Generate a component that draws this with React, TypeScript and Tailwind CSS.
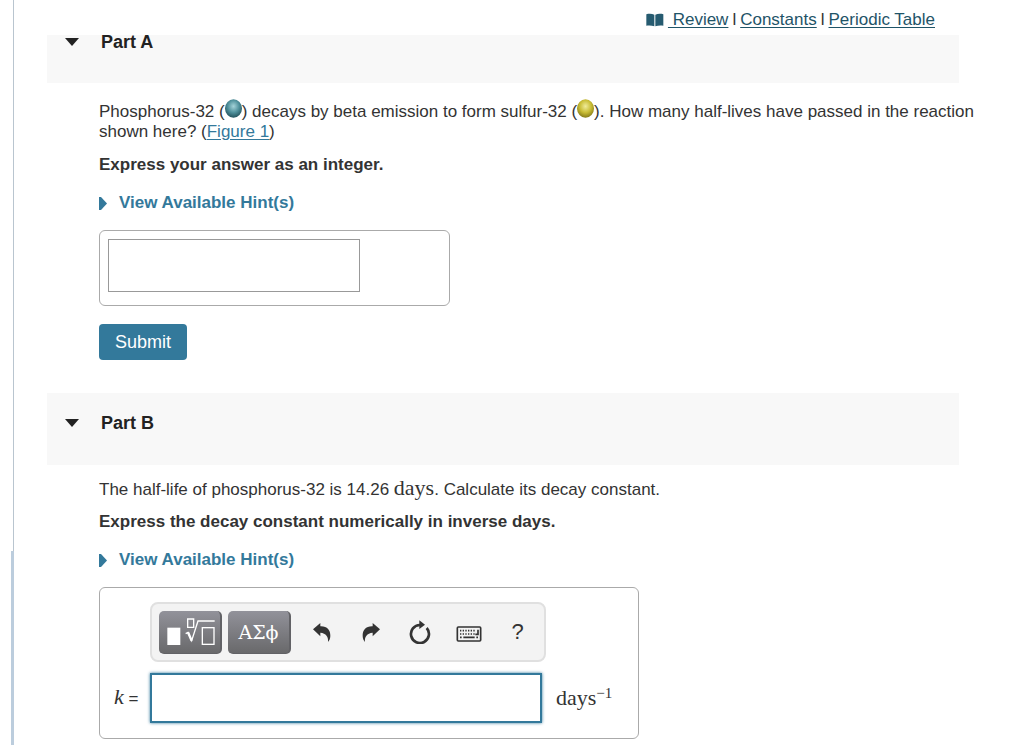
import { useState, type ReactNode } from 'react';

const linkClass = 'text-[#1f5468] underline underline-offset-2';

function BookIcon() {
  return (
    <svg className="h-3.5 w-[18px]" viewBox="0 0 54 42" aria-hidden="true">
      <path d="M1 4C8 2 18 2 25 5V40C18 37 8 37 1 38Z" fill="#265b70" />
      <path d="M28 5C35 2 45 2 52 4V38C45 37 35 37 28 40Z" fill="#265b70" />
    </svg>
  );
}

function Sphere({ id, light, mid, dark }: { id: string; light: string; mid: string; dark: string }) {
  return (
    <svg className="-mt-2 inline-block h-[19px] w-[17px]" viewBox="0 0 17 19" aria-hidden="true">
      <defs>
        <radialGradient id={id} cx="0.5" cy="0.38" r="0.62">
          <stop offset="0" stopColor={light} />
          <stop offset="0.55" stopColor={mid} />
          <stop offset="1" stopColor={dark} />
        </radialGradient>
      </defs>
      <ellipse cx="8.5" cy="9.5" rx="8.5" ry="9.3" fill={`url(#${id})`} />
    </svg>
  );
}

function ArrowIcon({ flip }: { flip?: boolean }) {
  return (
    <svg className="h-[21px] w-5" viewBox="0 0 60 63" aria-hidden="true">
      <path
        transform={flip ? 'translate(60 0) scale(-1 1)' : undefined}
        d="M3 22L25 3V13C45 12 56 25 55 42C55 50 52 56 48 60C50 45 42 33 25 32V43Z"
        fill="#333"
      />
    </svg>
  );
}

function ResetIcon() {
  return (
    <svg className="h-6 w-[22px]" viewBox="0 0 66 72" aria-hidden="true">
      <path d="M33 15A27 27 0 1 0 53 24" fill="none" stroke="#333" strokeWidth="8" />
      <path d="M31 1L48 14L31 27Z" fill="#333" />
    </svg>
  );
}

function KeyboardIcon() {
  return (
    <svg className="mt-1 h-4 w-[26px]" viewBox="0 0 78 48" aria-hidden="true">
      <rect x="4" y="3" width="70" height="42" rx="3" fill="none" stroke="#333" strokeWidth="5" />
      <path d="M12 14H60M12 24H56" stroke="#333" strokeWidth="5" strokeDasharray="4 4" />
      <path d="M66 11V25H58M12 34H17M22 34H56M61 34H66" fill="none" stroke="#333" strokeWidth="5" />
    </svg>
  );
}

function TemplateIcon() {
  return (
    <svg className="h-7 w-[50px]" viewBox="-4 0 150 84" aria-hidden="true">
      <rect x="3" y="29" width="39" height="52" fill="#fff" />
      <path d="M64 3H82V28H64Z" fill="none" stroke="#fff" strokeWidth="4" />
      <path d="M58 47L65 43L76 68L95 9H145" fill="none" stroke="#fff" strokeWidth="4" />
      <path d="M65 43L76 68" stroke="#fff" strokeWidth="7" />
      <rect x="108" y="29" width="35" height="50" fill="none" stroke="#fff" strokeWidth="4" />
    </svg>
  );
}

function PartTitle({ children, open, onToggle }: { children: ReactNode; open: boolean; onToggle: () => void }) {
  return (
    <h2 className="text-[18px] leading-3.5 font-bold text-[#222]">
      <button type="button" className="flex items-center" aria-expanded={open} onClick={onToggle}>
        <svg className="mr-[22px] h-2 w-3.5" viewBox="0 0 14 8" aria-hidden="true">
          <path d="M0 0H14L7 8Z" fill="#222" />
        </svg>
        {children}
      </button>
    </h2>
  );
}

function HintToggle() {
  return (
    <button type="button" className="flex items-center text-[17px] leading-5 font-bold text-[#33799b]">
      <svg className="mr-3 h-[13px] w-2" viewBox="0 0 8 13" aria-hidden="true">
        <path d="M0 0H2L8 6.5L2 13H0Z" fill="#33799b" />
      </svg>
      View Available Hint(s)
    </button>
  );
}

const darkKey =
  'flex h-[43px] w-[63px] items-center justify-center rounded-[5px] border-r-2 border-b border-[#626266] bg-linear-to-b from-[#92929a] to-[#69696b] text-white';
const flatKey = 'flex h-[43px] w-[49px] items-center justify-center text-[#333]';

export default function App() {
  const [openA, setOpenA] = useState(true);
  const [openB, setOpenB] = useState(true);
  const [answerA, setAnswerA] = useState('');
  const [answerB, setAnswerB] = useState('');

  return (
    <div className="flex min-h-screen bg-white font-['Liberation_Sans',Arial,sans-serif] text-[17px] leading-5 text-[#333]">
      {/* Pane divider with its scroll thumb */}
      <div className="flex w-3.5 shrink-0 flex-col items-end">
        <div className="h-[551px] w-px bg-[#b9c5cf]" />
        <div className="w-[3px] flex-1 bg-[#bccddd]" />
      </div>

      <main className="mr-[65px] ml-[33px] min-w-0 flex-1">
        <nav className="flex h-[35px] items-start justify-end gap-1 pt-2.5 pr-6">
          <a href="#review" className="flex items-center gap-1 text-[#1f5468]">
            <BookIcon />
            <span className="underline underline-offset-2">&nbsp;Review</span>
          </a>
          <span>l</span>
          <a href="#constants" className={linkClass}>Constants</a>
          <span>l</span>
          <a href="#periodic-table" className={linkClass}>Periodic Table</a>
        </nav>

        <section>
          <div className="h-12 bg-[#f8f8f8] pl-[18px]">
            <PartTitle open={openA} onToggle={() => setOpenA(!openA)}>Part A</PartTitle>
          </div>
          {openA && (
            <div className="flex flex-col items-start pt-[19px] pb-[33px] pl-[52px]">
              <p className="-mr-6">
                Phosphorus-32 (<Sphere id="phosphorus" light="#a5d3d9" mid="#4f909b" dark="#23525c" />) decays by beta
                emission to form sulfur-32 (<Sphere id="sulfur" light="#f0ec9a" mid="#c9bd35" dark="#857a18" />). How
                many half-lives have passed in the reaction shown here? (
                <a href="#figure-1" className="text-[#33799b] underline underline-offset-2">Figure 1</a>)
              </p>
              <p className="mt-[13px] font-bold">Express your answer as an integer.</p>
              <div className="mt-[18px]">
                <HintToggle />
              </div>
              <div className="mt-[17px] h-[76px] w-[351px] rounded-md border border-[#aaa] p-2">
                <input
                  type="text"
                  aria-label="Number of half-lives"
                  value={answerA}
                  onChange={(e) => setAnswerA(e.target.value)}
                  className="h-[53px] w-[252px] border border-[#999] px-2 outline-none"
                />
              </div>
              <button type="submit" className="mt-[18px] h-9 rounded-sm bg-[#33799b] px-4 text-[18px] text-white">
                Submit
              </button>
            </div>
          )}
        </section>

        <section>
          <div className="flex h-[72px] items-start bg-[#f8f8f8] pt-[23px] pl-[18px]">
            <PartTitle open={openB} onToggle={() => setOpenB(!openB)}>Part B</PartTitle>
          </div>
          {openB && (
            <div className="flex flex-col items-start pt-[13px] pb-1.5 pl-[52px]">
              <p>
                The half-life of phosphorus-32 is 14.26{' '}
                <span className="font-['Liberation_Serif',serif] text-[22px]">days</span>. Calculate its decay constant.
              </p>
              <p className="mt-3 font-bold">Express the decay constant numerically in inverse days.</p>
              <div className="mt-[18px]">
                <HintToggle />
              </div>
              <div className="mt-[17px] grid h-[152px] w-[540px] grid-cols-[36px_396px_1fr] content-start gap-y-[11px] rounded-md border border-[#aaa] pt-3.5 pl-3.5">
                <div className="col-start-2 flex h-[60px] items-center rounded-lg border-2 border-[#e0e0e0] bg-[#f3f3f3] pl-[7px]">
                  <button type="button" className={darkKey} aria-label="Templates">
                    <TemplateIcon />
                  </button>
                  <button type="button" className={`${darkKey} mr-1.5 ml-1.5 font-['DejaVu_Serif',serif] text-[19px]`}>
                    ΑΣϕ
                  </button>
                  <button type="button" className={flatKey} aria-label="Undo"><ArrowIcon /></button>
                  <button type="button" className={flatKey} aria-label="Redo"><ArrowIcon flip /></button>
                  <button type="button" className={flatKey} aria-label="Reset"><ResetIcon /></button>
                  <button type="button" className={flatKey} aria-label="Keyboard shortcuts"><KeyboardIcon /></button>
                  <button type="button" className={`${flatKey} text-[22px]`} aria-label="Help">?</button>
                </div>
                <label htmlFor="decay-constant" className="col-start-1 self-center">
                  <i className="font-['Liberation_Serif',serif] text-[22px]">k</i> =
                </label>
                <input
                  id="decay-constant"
                  type="text"
                  value={answerB}
                  onChange={(e) => setAnswerB(e.target.value)}
                  className="h-[50px] w-[392px] border-2 border-[#33799b] px-2 shadow-[0_0_3px_#33799b] outline-none"
                />
                <span className="self-center pl-2.5 font-['Liberation_Serif',serif] text-[22px]">
                  days<sup className="text-[15px]">−1</sup>
                </span>
              </div>
            </div>
          )}
        </section>
      </main>
    </div>
  );
}
